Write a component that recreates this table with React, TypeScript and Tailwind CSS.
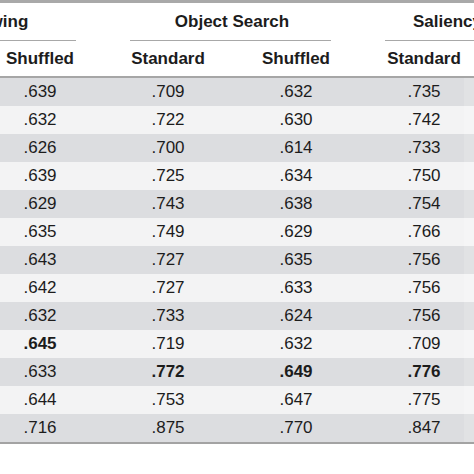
import React from 'react';

type Cell = { v: string; b?: boolean };

const shuffled1 = ['.639', '.632', '.626', '.639', '.629', '.635', '.643', '.642', '.632', '.645', '.633', '.644', '.716'];
const standard2 = ['.709', '.722', '.700', '.725', '.743', '.749', '.727', '.727', '.733', '.719', '.772', '.753', '.875'];
const shuffled2 = ['.632', '.630', '.614', '.634', '.638', '.629', '.635', '.633', '.624', '.632', '.649', '.647', '.770'];
const standard3 = ['.735', '.742', '.733', '.750', '.754', '.766', '.756', '.756', '.756', '.709', '.776', '.775', '.847'];

const rows: Cell[][] = shuffled1.map((_, i) => [
  { v: shuffled1[i], b: i === 9 },
  { v: standard2[i], b: i === 10 },
  { v: shuffled2[i], b: i === 10 },
  { v: standard3[i], b: i === 10 },
]);

const subheads = ['Standard', 'Shuffled', 'Standard', 'Shuffled', 'Standard', 'Shuffled'];

const App: React.FC = () => {
  return (
    <div
      className="w-[474px] h-[474px] overflow-hidden bg-white text-[#1c1c1c] text-[17px]"
      style={{ fontFamily: '"Liberation Sans", Arial, sans-serif' }}
    >
      <div className="h-[3px] bg-[#a9a9a9]" />
      <div className="ml-[-152px] w-[768px]">
        {/* group headers */}
        <div className="flex">
          <div className="w-[256px]">
            <div className="h-[37px] flex items-center justify-center font-bold">Free Viewing</div>
            <div className="ml-[27px] mr-[28px] h-px bg-[#a8a8a8]" />
          </div>
          <div className="w-[256px]">
            <div className="h-[37px] flex items-center justify-center font-bold">Object Search</div>
            <div className="ml-[26px] mr-[29px] h-px bg-[#a8a8a8]" />
          </div>
          <div className="w-[256px]">
            <div className="h-[37px] flex items-center pl-[53px] font-bold whitespace-nowrap">Saliency Prediction</div>
            <div className="ml-[25px] mr-[28px] h-px bg-[#a8a8a8]" />
          </div>
        </div>

        {/* sub headers */}
        <div className="flex h-[35px] items-center font-bold">
          {subheads.map((s, i) => (
            <div key={i} className="w-[128px] text-center">{s}</div>
          ))}
        </div>
        <div className="h-[2px] bg-[#a6a6a6]" />

        {/* body */}
        {rows.map((r, i) => (
          <div
            key={i}
            className={`flex h-[28px] items-center ${i % 2 === 0 ? 'bg-[#dcdde0]' : 'bg-[#f3f3f4]'}`}
          >
            <div className="w-[128px]" />
            {r.map((c, j) => (
              <div key={j} className={`w-[128px] text-center ${c.b ? 'font-bold' : ''}`}>
                {c.v}
              </div>
            ))}
            <div
              className={`w-[128px] self-stretch ml-[-24px] ${i % 2 === 0 ? 'bg-[#e1e2e4]' : 'bg-[#f5f5f6]'}`}
            />
          </div>
        ))}
        <div className="h-[2px] bg-[#a3a3a3]" />
      </div>
    </div>
  );
};

export default App;
